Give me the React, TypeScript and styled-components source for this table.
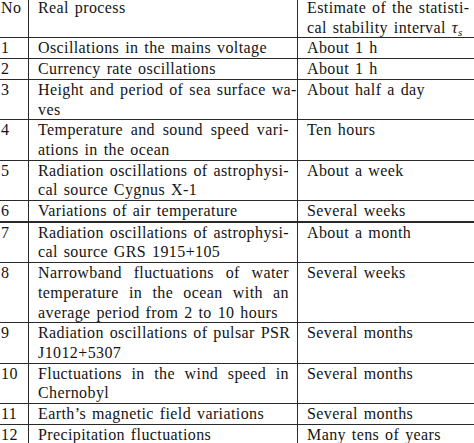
import React from "react";
import styled, { createGlobalStyle } from "styled-components";

const GlobalStyle = createGlobalStyle`
  html, body {
    margin: 0;
    padding: 0;
    background: #ffffff;
  }
  body {
    width: 474px;
    height: 443px;
    overflow: hidden;
  }
`;

const rule = "#2a2a2a";

const Table = styled.div`
  margin: -3px 0 0 -8px;
  width: 487px;
  border-top: 1px solid ${rule};
  border-left: 1px solid ${rule};
  font-family: "Liberation Serif", "Times New Roman", serif;
  font-size: 16px;
  line-height: 19.7px;
  letter-spacing: 0.4px;
  word-spacing: 1.5px;
  color: #141414;
`;

const Row = styled.div<{ $heavy?: boolean }>`
  display: flex;
  border-bottom: ${(p) => (p.$heavy ? 2 : 1)}px solid ${rule};
`;

const NumCell = styled.div`
  box-sizing: border-box;
  flex: none;
  width: 36px;
  padding-left: 8px;
  border-right: 1px solid ${rule};
`;

const ProcessCell = styled.div`
  box-sizing: border-box;
  flex: none;
  width: 269px;
  padding: 0 8px 0 9px;
  border-right: 1px solid ${rule};
`;

const EstimateCell = styled.div`
  box-sizing: border-box;
  flex: none;
  width: 181px;
  padding: 0 9px;
  border-right: 1px solid ${rule};
`;

const Line = styled.div<{ $justify?: boolean }>`
  white-space: nowrap;
  text-align: ${(p) => (p.$justify ? "justify" : "left")};
  text-align-last: ${(p) => (p.$justify ? "justify" : "left")};
`;

const Tau = styled.span`
  font-style: italic;
`;

const Sub = styled.sub`
  font-size: 11px;
  font-style: italic;
  line-height: 0;
  vertical-align: -3px;
`;

interface Entry {
  n: string;
  process: string[];
  estimate: string;
  heavy?: boolean;
}

const rows: Entry[] = [
  { n: "1", process: ["Oscillations in the mains voltage"], estimate: "About 1 h" },
  { n: "2", process: ["Currency rate oscillations"], estimate: "About 1 h" },
  { n: "3", process: ["Height and period of sea surface wa-", "ves"], estimate: "About half a day" },
  { n: "4", process: ["Temperature and sound speed vari-", "ations in the ocean"], estimate: "Ten hours" },
  { n: "5", process: ["Radiation oscillations of astrophysi-", "cal source Cygnus X-1"], estimate: "About a week" },
  { n: "6", process: ["Variations of air temperature"], estimate: "Several weeks", heavy: true },
  { n: "7", process: ["Radiation oscillations of astrophysi-", "cal source GRS 1915+105"], estimate: "About a month" },
  {
    n: "8",
    process: [
      "Narrowband fluctuations of water",
      "temperature in the ocean with an",
      "average period from 2 to 10 hours",
    ],
    estimate: "Several weeks",
  },
  { n: "9", process: ["Radiation oscillations of pulsar PSR", "J1012+5307"], estimate: "Several months" },
  { n: "10", process: ["Fluctuations in the wind speed in", "Chernobyl"], estimate: "Several months" },
  { n: "11", process: ["Earth\u2019s magnetic field variations"], estimate: "Several months" },
  { n: "12", process: ["Precipitation fluctuations"], estimate: "Many tens of years" },
];

const renderLines = (lines: string[]) =>
  lines.map((text, i) => (
    <Line key={i} $justify={i < lines.length - 1}>
      {text}
    </Line>
  ));

export default function App() {
  return (
    <>
      <GlobalStyle />
      <Table>
        <Row>
          <NumCell>No</NumCell>
          <ProcessCell>Real process</ProcessCell>
          <EstimateCell>
            <Line $justify>Estimate of the statisti-</Line>
            <Line>
              cal stability interval <Tau>τ</Tau>
              <Sub>s</Sub>
            </Line>
          </EstimateCell>
        </Row>
        {rows.map((r) => (
          <Row key={r.n} $heavy={r.heavy}>
            <NumCell>{r.n}</NumCell>
            <ProcessCell>{renderLines(r.process)}</ProcessCell>
            <EstimateCell>{r.estimate}</EstimateCell>
          </Row>
        ))}
      </Table>
    </>
  );
}
